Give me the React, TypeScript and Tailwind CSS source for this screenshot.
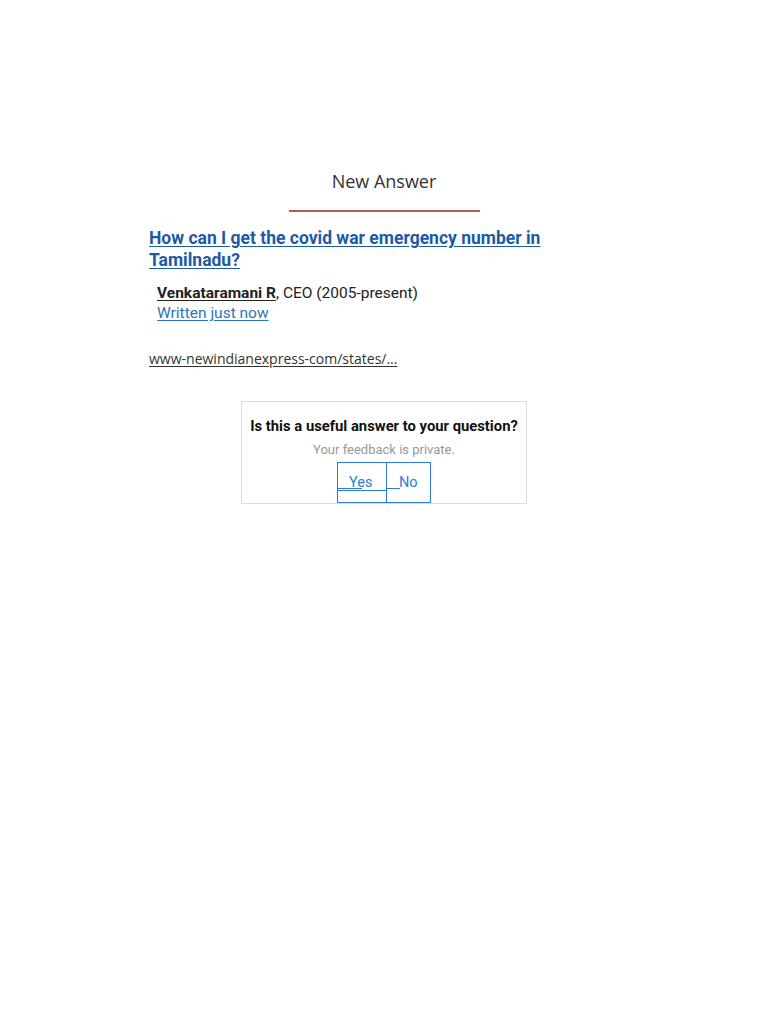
import React from "react";

export default function App() {
  return (
    <div className="min-h-[1024px] w-full bg-white" style={{ fontFamily: "Roboto, 'Liberation Sans', sans-serif" }}>
      <div className="mx-auto w-[470px] pt-[169px]">
        <div className="text-center text-[18px] leading-[24px] text-[#333]" style={{ fontFamily: "'Open Sans', sans-serif" }}>
          New Answer
        </div>
        <div className="mx-auto mt-[17px] h-[2px] w-[191px] bg-[#c2564c]" />
        <a href="#" className="mt-[15px] block text-[17.5px] font-bold leading-[22px] text-[#1d5aa5] underline underline-offset-2">
          How can I get the covid war emergency number in Tamilnadu?
        </a>
        <div className="mt-[12px] pl-[8px] text-[15.5px] leading-[20px] text-[#222]">
          <div>
            <span className="font-bold underline underline-offset-2">Venkataramani R</span>, CEO (2005-present)
          </div>
          <a href="#" className="block w-fit text-[#2b73c0] underline underline-offset-2">Written just now</a>
        </div>
        <div className="mt-[26px] text-[14px] leading-[20px] text-[#333] underline underline-offset-2" style={{ fontFamily: "'Open Sans', sans-serif" }}>
          www-newindianexpress-com/states/...
        </div>
      </div>
      <div className="mx-auto mt-[32px] flex w-[286px] flex-col items-center border border-[#dddddd] pt-[14px] text-center">
        <div className="text-[14.8px] font-bold leading-[20px] text-[#111]">Is this a useful answer to your question?</div>
        <div className="mt-[6px] text-[13px] leading-[16px] text-[#999]">Your feedback is private.</div>
        <div className="mt-[4px] flex">
          <div className="relative flex h-[41px] w-[50px] items-center border border-[#2b7ed8] pl-[11px] text-[14.5px] text-[#2b7ed8]">
            <span>Yes</span>
            <span className="absolute left-0 top-[25px] h-[1px] w-[24px] bg-[#2b7ed8]" />
            <span className="absolute left-0 top-[27px] h-[1px] w-full bg-[#2b7ed8]" />
          </div>
          <div className="relative ml-[-1px] flex h-[41px] w-[45px] items-center border border-[#2b7ed8] pl-[12px] text-[14.5px] text-[#2b7ed8]">
            <span>No</span>
            <span className="absolute left-0 top-[25px] h-[1px] w-[13px] bg-[#2b7ed8]" />
          </div>
        </div>
      </div>
    </div>
  );
}
